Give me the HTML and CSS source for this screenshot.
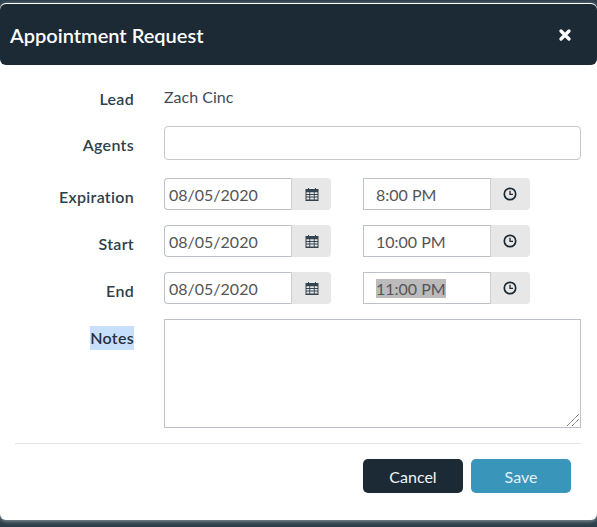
FILE: index.html
```html
<!DOCTYPE html>
<html lang="en">
<head>
<meta charset="utf-8">
<title>Appointment Request</title>
<link rel="stylesheet" href="styles.css">
</head>
<body>
<svg class="sprites" width="0" height="0" aria-hidden="true">
  <symbol id="cal" viewBox="0 0 14 14">
    <path fill="#35434e" d="M0.5 2h2.5v-1h1v1h6v-1h1v1h2.5v12h-13zM1.5 5.2v1.8h2.8v-1.8zM5.2 5.2v1.8h3.6v-1.8zM9.7 5.2v1.8h2.8v-1.8zM1.5 7.9v1.7h2.8v-1.7zM5.2 7.9v1.7h3.6v-1.7zM9.7 7.9v1.7h2.8v-1.7zM1.5 10.5v2h2.8v-2zM5.2 10.5v2h3.6v-2zM9.7 10.5v2h2.8v-2z" fill-rule="evenodd"/>
  </symbol>
  <symbol id="clock" viewBox="0 0 14 14">
    <circle cx="7" cy="7" r="5.7" fill="none" stroke="#1c2a35" stroke-width="1.7"/>
    <path d="M7 3.8v3.5h3" fill="none" stroke="#1c2a35" stroke-width="1.3"/>
  </symbol>
</svg>
<main class="modal">
  <header class="modal-head">
    <h1 class="modal-title">Appointment Request</h1>
    <svg class="close" viewBox="0 0 12 12" width="12" height="12" aria-label="Close"><path d="M2 2l8 8M10 2l-8 8" stroke="#fff" stroke-width="3.2" stroke-linecap="round"/></svg>
  </header>
  <form class="modal-body">
    <div class="row row-lead"><span class="label">Lead</span><span class="static">Zach Cinc</span></div>
    <div class="row row-agents"><span class="label">Agents</span><input class="text-input" type="text"></div>
    <div class="row row-pick">
      <span class="label">Expiration</span>
      <div class="pick"><div class="pick-value date">08/05/2020</div><div class="addon"><svg class="ico-cal"><use href="#cal"/></svg></div></div>
      <div class="pick"><div class="pick-value time">8:00 PM</div><div class="addon"><svg class="ico-clock"><use href="#clock"/></svg></div></div>
    </div>
    <div class="row row-pick">
      <span class="label">Start</span>
      <div class="pick"><div class="pick-value date">08/05/2020</div><div class="addon"><svg class="ico-cal"><use href="#cal"/></svg></div></div>
      <div class="pick"><div class="pick-value time">10:00 PM</div><div class="addon"><svg class="ico-clock"><use href="#clock"/></svg></div></div>
    </div>
    <div class="row row-pick">
      <span class="label">End</span>
      <div class="pick"><div class="pick-value date">08/05/2020</div><div class="addon"><svg class="ico-cal"><use href="#cal"/></svg></div></div>
      <div class="pick"><div class="pick-value time"><span class="sel-grey">11:00 PM</span></div><div class="addon"><svg class="ico-clock"><use href="#clock"/></svg></div></div>
    </div>
    <div class="row row-notes">
      <span class="label"><span class="sel-blue">Notes</span></span>
      <div class="notes-wrap">
        <textarea class="notes"></textarea>
        <svg class="grip" viewBox="0 0 14 14" width="14" height="14" aria-hidden="true"><path d="M1 13L13 1M6 13l7-7" stroke="#555" stroke-width="1" stroke-dasharray="1.2 .6" fill="none"/></svg>
      </div>
    </div>
    <hr class="divider">
    <div class="actions">
      <button class="btn btn-cancel" type="button">Cancel</button>
      <button class="btn btn-save" type="button">Save</button>
    </div>
  </form>
</main>
</body>
</html>
```
FILE: styles.css
```css
* { box-sizing: border-box; }
html, body { margin: 0; height: 100%; }
body {
  background: #2c3e4a;
  font-family: Lato, "Liberation Sans", sans-serif;
  padding-top: 3px;
  overflow: hidden;
}
.sprites { position: absolute; }
.modal {
  height: 517px;
  background: #fff;
  border-radius: 6px;
  padding-top: 1px;
  box-shadow: 0 1px 4px rgba(255,255,255,.5);
}
.modal-head {
  height: 61px;
  background: #1c2a35;
  border-radius: 6px;
  display: flex;
  align-items: center;
  justify-content: space-between;
  padding: 0 26px 0 10px;
}
.modal-title { margin: 0; color: #fff; font-size: 20px; font-weight: 600; }
.close { display: block; }
.modal-body { padding: 0 16px 0 15px; }
.row { display: flex; }
.label {
  width: 119px;
  margin-right: 30px;
  flex: none;
  text-align: right;
  font-size: 16px;
  font-weight: 600;
  letter-spacing: .3px;
  color: #2f3f4c;
}
.row-lead { height: 61px; padding-top: 22px; }
.row-lead .label { padding-top: 2px; }
.static { font-size: 16px; color: #3f4b55; line-height: 19px; }
.row-agents { height: 52px; }
.row-agents .label { padding-top: 9px; }
.text-input {
  width: 417px;
  height: 34px;
  border: 1px solid #c8c8c8;
  border-radius: 4px;
  background: #fff;
}
.row-pick { height: 47px; }
.row-pick .label { padding-top: 9px; }
.pick { display: flex; height: 32px; width: 199px; }
.pick-value {
  width: 128px;
  height: 32px;
  border: 1px solid #bcc2c7;
  border-right-color: #ccd0d3;
  border-radius: 4px 0 0 4px;
  font-size: 16px;
  line-height: 32px;
  color: #555;
}
.pick-value.date { padding-left: 4px; }
.pick-value.time { padding-left: 12px; border-radius: 0; }
.addon {
  width: 39px;
  height: 32px;
  background: #e7e7e7;
  border-radius: 0 4px 4px 0;
  display: flex;
  align-items: center;
  justify-content: center;
}
.ico-cal { width: 14px; height: 14px; }
.ico-clock { width: 14px; height: 14px; margin-right: 1px; }
.sel-grey { background: #bbb; display: inline-block; line-height: 19px; }
.sel-blue { background: #c8dffb; color: #24323d; display: inline-block; line-height: 24px; }
.row-notes { height: 124px; }
.notes-wrap { position: relative; width: 417px; height: 109px; }
.notes {
  width: 417px;
  height: 109px;
  border: 1px solid #bcc2c7;
  background: #fff;
  display: block;
  resize: none;
}
.grip { position: absolute; right: 1px; bottom: 1px; }
.row-notes .label { padding-top: 7px; }
.divider { margin: 0 0 15px; border: 0; border-top: 1px solid #e5e5e5; width: 566px; }
.actions { display: flex; gap: 8px; justify-content: flex-end; padding-right: 10px; }
.btn {
  width: 100px;
  height: 34px;
  border: 0;
  border-radius: 5px;
  font-family: inherit;
  font-size: 16px;
  color: #f2f5f7;
}
.btn-cancel { background: #1c2a35; }
.btn-save { background: #3995ba; color: #e4f0f5; }
```
